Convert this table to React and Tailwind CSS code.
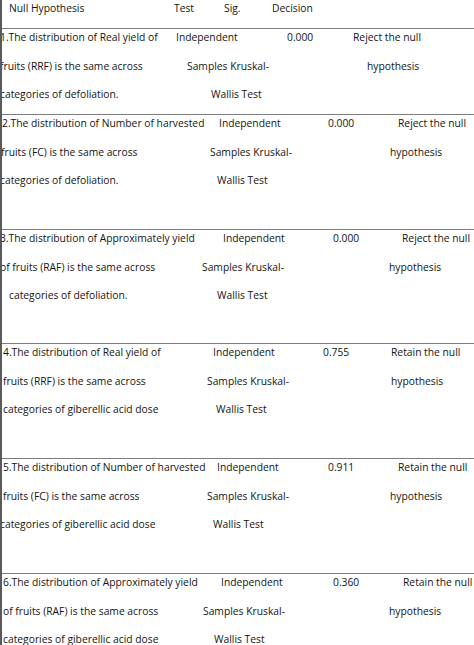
const rows = [
  {
    h: 'h-[86px]',
    c1: [['pl-0', '1.The distribution of Real yield of'], ['pl-0', 'fruits (RRF) is the same across'], ['pl-0', 'categories of defoliation.']],
    c2: [['pl-[6px]', 'Independent'], ['pl-[17px]', 'Samples Kruskal-'], ['pl-[41px]', 'Wallis Test']],
    c3: ['pl-[7px]', '0.000'],
    c4: [['pl-[13px]', 'Reject the null'], ['pl-[27px]', 'hypothesis']],
  },
  {
    h: 'h-[115px]',
    c1: [['pl-[2px]', '2.The distribution of Number of harvested'], ['pl-[1px]', 'fruits (FC) is the same across'], ['pl-0', 'categories of defoliation.']],
    c2: [['pl-[49px]', 'Independent'], ['pl-[40px]', 'Samples Kruskal-'], ['pl-[47px]', 'Wallis Test']],
    c3: ['pl-[48px]', '0.000'],
    c4: [['pl-[58px]', 'Reject the null'], ['pl-[50px]', 'hypothesis']],
  },
  {
    h: 'h-[114px]',
    c1: [['pl-0', '3.The distribution of Approximately yield'], ['pl-0', 'of fruits (RAF) is the same across'], ['pl-[9px]', 'categories of defoliation.']],
    c2: [['pl-[53px]', 'Independent'], ['pl-[32px]', 'Samples Kruskal-'], ['pl-[47px]', 'Wallis Test']],
    c3: ['pl-[53px]', '0.000'],
    c4: [['pl-[62px]', 'Reject the null'], ['pl-[49px]', 'hypothesis']],
  },
  {
    h: 'h-[115px]',
    c1: [['pl-[3px]', '4.The distribution of Real yield of'], ['pl-[3px]', 'fruits (RRF) is the same across'], ['pl-[3px]', 'categories of giberellic acid dose']],
    c2: [['pl-[43px]', 'Independent'], ['pl-[37px]', 'Samples Kruskal-'], ['pl-[46px]', 'Wallis Test']],
    c3: ['pl-[43px]', '0.755'],
    c4: [['pl-[51px]', 'Retain the null'], ['pl-[51px]', 'hypothesis']],
  },
  {
    h: 'h-[115px]',
    c1: [['pl-[3px]', '5.The distribution of Number of harvested'], ['pl-[3px]', 'fruits (FC) is the same across'], ['pl-0', 'categories of giberellic acid dose']],
    c2: [['pl-[47px]', 'Independent'], ['pl-[37px]', 'Samples Kruskal-'], ['pl-[43px]', 'Wallis Test']],
    c3: ['pl-[48px]', '0.911'],
    c4: [['pl-[58px]', 'Retain the null'], ['pl-[50px]', 'hypothesis']],
  },
  {
    h: 'h-[115px]',
    c1: [['pl-[3px]', '6.The distribution of Approximately yield'], ['pl-[3px]', 'of fruits (RAF) is the same across'], ['pl-[3px]', 'categories of giberellic acid dose']],
    c2: [['pl-[51px]', 'Independent'], ['pl-[33px]', 'Samples Kruskal-'], ['pl-[44px]', 'Wallis Test']],
    c3: ['pl-[53px]', '0.360'],
    c4: [['pl-[63px]', 'Retain the null'], ['pl-[49px]', 'hypothesis']],
  },
]

function Line({ pad, children }) {
  return <div className={`h-[28.5px] leading-[16px] whitespace-nowrap ${pad}`}>{children}</div>
}

export default function App() {
  return (
    <div className="relative w-[474px] h-[645px] overflow-hidden bg-white text-[#141414] font-['Open_Sans',sans-serif] text-[10.3px]">
      {/* header */}
      <div className="grid grid-cols-[174px_50px_48px_1fr] h-[28px] pt-px leading-[15px]">
        <div className="pl-[9px]">Null Hypothesis</div>
        <div>Test</div>
        <div>Sig.</div>
        <div>Decision</div>
      </div>

      {rows.map((r, i) => (
        <div key={i} className={`grid grid-cols-[170px_110px_60px_1fr] border-t-[1.5px] border-[#7d7d7d] ${r.h}`}>
          <div className="flex flex-col">
            {r.c1.map(([p, t]) => <Line key={t} pad={p}>{t}</Line>)}
          </div>
          <div className="flex flex-col">
            {r.c2.map(([p, t]) => <Line key={t} pad={p}>{t}</Line>)}
          </div>
          <div className="flex flex-col">
            <Line pad={r.c3[0]}>{r.c3[1]}</Line>
          </div>
          <div className="flex flex-col">
            {r.c4.map(([p, t]) => <Line key={t} pad={p}>{t}</Line>)}
          </div>
        </div>
      ))}

      {/* left rule of the scanned table */}
      <div className="absolute left-0 top-0 bottom-0 w-[1.5px] bg-[#5a5a5a]" />
    </div>
  )
}
